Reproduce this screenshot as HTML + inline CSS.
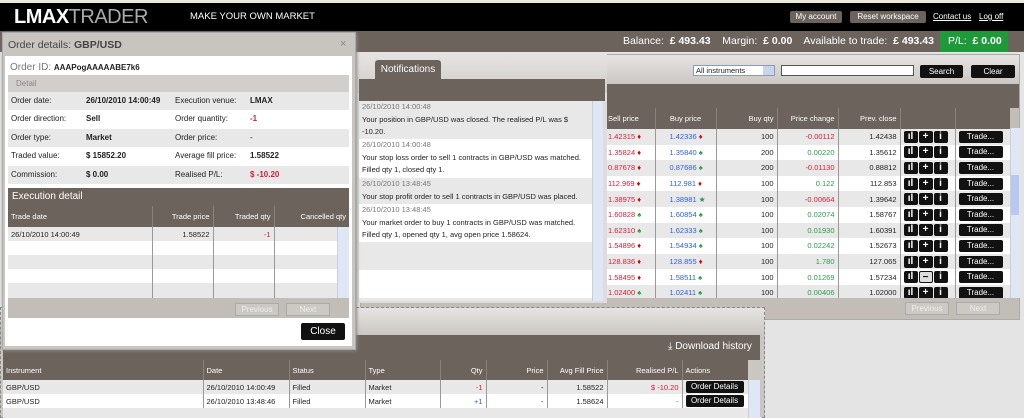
<!DOCTYPE html><html><head><style>
*{box-sizing:border-box;margin:0;padding:0}
body{width:1024px;height:418px;overflow:hidden;background:#e4e4e4;font-family:"Liberation Sans",sans-serif;font-size:8px;color:#222;position:relative}
.a{position:absolute}
.dk{background:#6c635d;color:#fff}
.btn{background:#111;color:#fff;border-radius:2px;text-align:center;font-size:8px}
table{border-collapse:collapse;width:100%}
td,th{font-size:7.5px;padding:0 3px;white-space:nowrap;overflow:hidden}
th{font-weight:normal;color:#fff;text-align:left;border-left:1px solid #8a827c}
.r{text-align:right}
.red{color:#d0203a}.blu{color:#3060e0}.grn{color:#2a9d4a}
.ic{display:inline-block;width:14px;height:12px;background:#111;border-radius:2px;color:#fff;font-weight:bold;font-size:10px;line-height:12px;text-align:center;margin-right:1px;vertical-align:middle}
.tr{display:inline-block;width:44px;height:12px;background:#111;color:#fff;border-radius:2px;text-align:center;line-height:12px;font-size:8px;vertical-align:middle}
.sb{background:#dfe6f5;border-left:1px solid #c8d0e0}
</style></head><body>
<div class="a" style="left:0;top:0;width:1024px;height:3px;background:#ece9dc"></div>
<div class="a" style="left:0;top:3px;width:1024px;height:28px;background:#000"></div>
<div class="a" style="left:14px;top:6px;font-size:20px;color:#fff;letter-spacing:-0.5px"><b style="font-weight:900">LMAX</b><span style="color:#aaa;font-weight:normal">TRADER</span></div>
<div class="a" style="left:190px;top:11px;font-size:9.5px;color:#fff">MAKE YOUR OWN MARKET</div>
<div class="a btn" style="left:790px;top:11px;width:52px;height:12px;background:#6c635d;line-height:12px">My account</div>
<div class="a btn" style="left:850px;top:11px;width:76px;height:12px;background:#6c635d;line-height:12px">Reset workspace</div>
<div class="a" style="left:933px;top:12px;color:#fff;text-decoration:underline;font-size:8px">Contact us</div>
<div class="a" style="left:979px;top:12px;color:#fff;text-decoration:underline;font-size:8px">Log off</div>
<div class="a dk" style="left:0;top:31px;width:1024px;height:21px"></div>
<div class="a" style="left:623px;top:35px;color:#fff;font-size:10.5px;white-space:nowrap">Balance:&nbsp; <b>£ 493.43</b>&nbsp;&nbsp;&nbsp; Margin:&nbsp; <b>£ 0.00</b>&nbsp;&nbsp;&nbsp; Available to trade:&nbsp; <b>£ 493.43</b></div>
<div class="a" style="left:940px;top:31px;width:68px;height:21px;background:#1e9a3a;color:#fff;font-size:10.5px;line-height:21px;padding-left:8px">P/L:&nbsp; <b>£ 0.00</b></div>

<!-- instruments panel -->
<div class="a" style="left:360px;top:54px;width:660px;height:266px;background:#c2bdb7;border:1px solid #aaa"></div>
<div class="a" style="left:361px;top:55px;width:658px;height:30px;background:linear-gradient(#e6e4e2,#cac6c2)"></div>
<div class="a" style="left:693px;top:65px;width:82px;height:11px;background:#fff;border:1px solid #8a9ab8;font-size:7.5px;padding-left:2px;line-height:9px">All instruments<span style="position:absolute;right:0;top:0;width:11px;height:9px;background:#c8d4ec"></span></div>
<div class="a" style="left:781px;top:65px;width:133px;height:11px;background:#fff;border:1px solid #555"></div>
<div class="a btn" style="left:920px;top:65px;width:43px;height:13px;line-height:13px">Search</div>
<div class="a btn" style="left:971px;top:65px;width:44px;height:13px;line-height:13px">Clear</div>
<div class="a dk" style="left:361px;top:84px;width:658px;height:24px"></div>
<div class="a" style="left:605px;top:108px;width:405px;height:190px;background:#fff;overflow:hidden">
<table>
<tr class="dk" style="height:21px"><th style="border:0">Sell price</th><th style="text-align:center">Buy price</th><th class="r">Buy qty</th><th class="r">Price change</th><th class="r">Prev. close</th><th></th><th></th></tr>
<tbody id="rows"></tbody>
</table></div>
<div class="a sb" style="left:1010px;top:128px;width:10px;height:170px"></div>
<div class="a" style="left:1011px;top:175px;width:8px;height:40px;background:#b8c8ee"></div>
<div class="a" style="left:905px;top:302px;width:44px;height:13px;border:1px solid #aaa;background:#ccc8c4;color:#eee;text-align:center;line-height:11px">Previous</div>
<div class="a" style="left:956px;top:302px;width:44px;height:13px;border:1px solid #aaa;background:#ccc8c4;color:#eee;text-align:center;line-height:11px">Next</div>

<!-- notifications -->
<div class="a" style="left:357px;top:53px;width:250px;height:250px;background:linear-gradient(#e6e4e2,#d0ccc8 40px,#ddd 40px)"></div>
<div class="a dk" style="left:375px;top:60px;width:66px;height:20px;border-radius:3px 3px 0 0;font-size:10px;line-height:20px;text-align:center">Notifications</div>
<div class="a dk" style="left:359px;top:79px;width:246px;height:22px"></div>
<div class="a" style="left:359px;top:101px;width:233px;height:200px;background:#e8e8e8;font-size:7.5px;line-height:12.5px">
<div style="padding:0 3px;height:38px"><span style="color:#777">26/10/2010 14:00:48</span><br>Your position in GBP/USD was closed. The realised P/L was $<br>-10.20.</div>
<div style="padding:0 3px;height:39px;background:#fff"><span style="color:#777">26/10/2010 14:00:48</span><br>Your stop loss order to sell 1 contracts in GBP/USD was matched.<br>Filled qty 1, closed qty 1.</div>
<div style="padding:0 3px;height:26px"><span style="color:#777">26/10/2010 13:48:45</span><br>Your stop profit order to sell 1 contracts in GBP/USD was placed.</div>
<div style="padding:0 3px;height:38px;background:#fff"><span style="color:#777">26/10/2010 13:48:45</span><br>Your market order to buy 1 contracts in GBP/USD was matched.<br>Filled qty 1, opened qty 1, avg open price 1.58624.</div>
<div style="height:28px"></div><div style="height:28px;background:#fff"></div>
</div>
<div class="a sb" style="left:592px;top:101px;width:11px;height:200px"></div>

<!-- bottom panel -->
<div class="a" style="left:0;top:307px;width:765px;height:111px;background:linear-gradient(#e6e4e2,#cac6c2 28px);border:1px dashed #888"></div>
<div class="a dk" style="left:3px;top:335px;width:757px;height:25px"></div>
<div class="a" style="left:668px;top:341px;color:#fff;font-size:10px">⤓ Download history</div>
<div class="a" style="left:3px;top:360px;width:745px;height:58px;background:#fff;overflow:hidden">
<table>
<tr class="dk" style="height:20px"><th style="width:200px;border:0">Instrument</th><th style="width:86px">Date</th><th style="width:76px">Status</th><th style="width:75px">Type</th><th class="r" style="width:46px">Qty</th><th class="r" style="width:61px">Price</th><th class="r" style="width:60px">Avg Fill Price</th><th class="r" style="width:75px">Realised P/L</th><th>Actions</th></tr>
<tr style="height:14px;background:#e8e8e8"><td>GBP/USD</td><td style="border-left:1px solid #999">26/10/2010 14:00:49</td><td style="border-left:1px solid #999">Filled</td><td style="border-left:1px solid #999">Market</td><td class="r red" style="border-left:1px solid #999">-1</td><td class="r" style="border-left:1px solid #999">-</td><td class="r" style="border-left:1px solid #999">1.58522</td><td class="r red" style="border-left:1px solid #999">$ -10.20</td><td style="border-left:1px solid #999"><span class="tr" style="width:58px">Order Details</span></td></tr>
<tr style="height:14px"><td>GBP/USD</td><td style="border-left:1px solid #999">26/10/2010 13:48:46</td><td style="border-left:1px solid #999">Filled</td><td style="border-left:1px solid #999">Market</td><td class="r blu" style="border-left:1px solid #999">+1</td><td class="r" style="border-left:1px solid #999">-</td><td class="r" style="border-left:1px solid #999">1.58624</td><td class="r grn" style="border-left:1px solid #999">-</td><td style="border-left:1px solid #999"><span class="tr" style="width:58px">Order Details</span></td></tr>
<tr style="height:14px;background:#e8e8e8"><td colspan="9"></td></tr>
</table></div>
<div class="a sb" style="left:748px;top:380px;width:12px;height:38px"></div>

<!-- modal -->
<div class="a" style="left:2px;top:32px;width:354px;height:318px;background:#c8c4c0;border:1px solid #aaa;box-shadow:1px 1px 3px #888"></div>
<div class="a" style="left:8px;top:39px;font-size:10.5px;color:#444">Order details: <b>GBP/USD</b></div>
<div class="a" style="left:340px;top:38px;font-size:11px;color:#888">×</div>
<div class="a" style="left:5px;top:56px;width:347px;height:290px;background:#fff"></div>
<div class="a" style="left:10px;top:62px;font-size:10px;color:#777">Order ID: <b style="color:#222;font-size:8px">AAAPogAAAAABE7k6</b></div>
<div class="a" style="left:8px;top:75px;width:341px;height:17px;background:#d2cecb;color:#888;line-height:17px;padding-left:8px">Detail</div>
<div class="a" style="left:8px;top:92px;width:341px;font-size:8px">
<div style="height:18.4px;background:#e8e8e8;position:relative;line-height:18px"><span class="a" style="left:3px">Order date:</span><b class="a" style="left:78px">26/10/2010 14:00:49</b><span class="a" style="left:167px">Execution venue:</span><b class="a" style="left:242px">LMAX</b></div>
<div style="height:18.4px;position:relative;line-height:18px"><span class="a" style="left:3px">Order direction:</span><b class="a" style="left:78px">Sell</b><span class="a" style="left:167px">Order quantity:</span><b class="a red" style="left:242px">-1</b></div>
<div style="height:18.4px;background:#e8e8e8;position:relative;line-height:18px"><span class="a" style="left:3px">Order type:</span><b class="a" style="left:78px">Market</b><span class="a" style="left:167px">Order price:</span><span class="a" style="left:242px">-</span></div>
<div style="height:18.4px;position:relative;line-height:18px"><span class="a" style="left:3px">Traded value:</span><b class="a" style="left:78px">$ 15852.20</b><span class="a" style="left:167px">Average fill price:</span><b class="a" style="left:242px">1.58522</b></div>
<div style="height:18.4px;background:#e8e8e8;position:relative;line-height:18px"><span class="a" style="left:3px">Commission:</span><b class="a" style="left:78px">$ 0.00</b><span class="a" style="left:167px">Realised P/L:</span><b class="a red" style="left:242px">$ -10.20</b></div>
</div>
<div class="a dk" style="left:8px;top:188px;width:341px;height:18px;font-size:10px;line-height:18px;padding-left:4px">Execution detail</div>
<div class="a" style="left:8px;top:206px;width:341px;height:92px;background:#fff;overflow:hidden">
<table>
<tr class="dk" style="height:21px"><th style="width:144px;border:0">Trade date</th><th class="r" style="width:61px">Trade price</th><th class="r" style="width:61px">Traded qty</th><th class="r">Cancelled qty</th></tr>
<tr style="height:14px;background:#e8e8e8"><td>26/10/2010 14:00:49</td><td class="r" style="border-left:1px solid #999">1.58522</td><td class="r red" style="border-left:1px solid #999">-1</td><td class="r" style="border-left:1px solid #999">-</td></tr>
<tr style="height:14px"><td></td><td style="border-left:1px solid #999"></td><td style="border-left:1px solid #999"></td><td style="border-left:1px solid #999"></td></tr>
<tr style="height:14px;background:#e8e8e8"><td></td><td style="border-left:1px solid #999"></td><td style="border-left:1px solid #999"></td><td style="border-left:1px solid #999"></td></tr>
<tr style="height:14px"><td></td><td style="border-left:1px solid #999"></td><td style="border-left:1px solid #999"></td><td style="border-left:1px solid #999"></td></tr>
<tr style="height:15px;background:#e8e8e8"><td></td><td style="border-left:1px solid #999"></td><td style="border-left:1px solid #999"></td><td style="border-left:1px solid #999"></td></tr>
</table></div>
<div class="a sb" style="left:337px;top:227px;width:12px;height:71px"></div>
<div class="a" style="left:8px;top:298px;width:341px;height:20px;background:#c2bdb7"></div>
<div class="a" style="left:235px;top:303px;width:44px;height:13px;border:1px solid #aaa;background:#ccc8c4;color:#eee;text-align:center;line-height:11px">Previous</div>
<div class="a" style="left:286px;top:303px;width:44px;height:13px;border:1px solid #aaa;background:#ccc8c4;color:#eee;text-align:center;line-height:11px">Next</div>
<div class="a btn" style="left:301px;top:323px;width:44px;height:17px;line-height:17px;font-size:10px">Close</div>

<script>
var d=[["1.42315","r","1.42336","r","100","-0.00112","1.42438"],["1.35824","r","1.35840","g","200","0.00220","1.35612"],["0.87678","r","0.87686","g","200","-0.01130","0.88812"],["112.969","r","112.981","r","100","0.122","112.853"],["1.38975","r","1.38981","s","100","-0.00664","1.39642"],["1.60828","g","1.60854","g","100","0.02074","1.58767"],["1.62310","g","1.62333","g","100","0.01930","1.60391"],["1.54896","r","1.54934","g","100","0.02242","1.52673"],["128.836","r","128.855","r","100","1.780","127.065"],["1.58495","r","1.58511","g","100","0.01269","1.57234"],["1.02400","g","1.02411","g","100","0.00406","1.02000"],["","","","","","",""]];
var h="";d.forEach(function(r,i){function m(t){return t=="r"?'<span style="color:#d00">♦</span>':t=="g"?'<span style="color:#1a9a3a">♠</span>':t=="s"?'<span style="color:#1a9a3a">★</span>':''}
var neg=r[5].charAt(0)=="-";
h+='<tr style="height:15.6px;background:'+(i%2?'#fff':'#e8e8e8')+'"><td class="red" style="width:50px">'+r[0]+' '+m(r[1])+'</td><td class="blu" style="border-left:1px solid #999;width:61px;padding-left:14px">'+r[2]+' '+m(r[3])+'</td><td class="r" style="border-left:1px solid #999;width:61px">'+r[4]+'</td><td class="r '+(neg?'red':'grn')+'" style="border-left:1px solid #999;width:61px">'+r[5]+'</td><td class="r" style="border-left:1px solid #999;width:62px">'+r[6]+'</td><td style="border-left:1px solid #999;width:55px"><span class="ic">ıl</span><span class="ic"'+(i==9?' style="background:#ddd;color:#111;border:1px solid #111"':'')+'>'+(i==9?'−':'+')+'</span><span class="ic">i</span></td><td style="border-left:1px solid #999"><span class="tr">Trade...</span></td></tr>'});
document.getElementById("rows").innerHTML=h;
</script>
</body></html>
